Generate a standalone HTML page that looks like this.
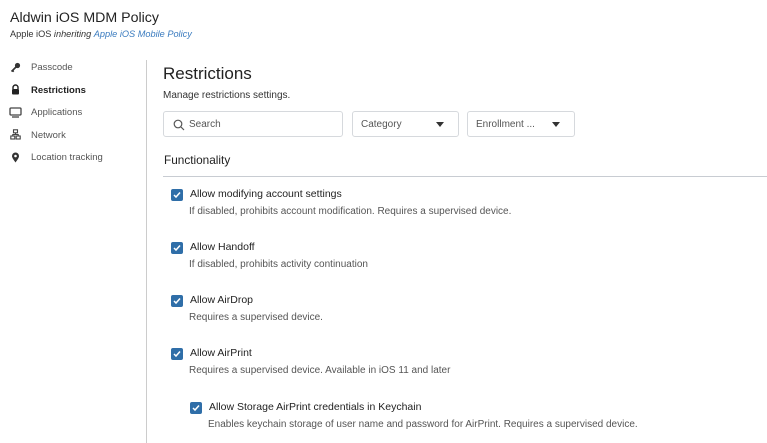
<!DOCTYPE html><html><head><style>
*{margin:0;padding:0;box-sizing:border-box}
body{width:767px;height:443px;overflow:hidden;background:#fff;font-family:"Liberation Sans",sans-serif;color:#222;position:relative}
.a{position:absolute;white-space:nowrap}
.nav{font-size:9.5px;color:#555}
.cb{position:absolute;width:12px;height:12px;background:#2f6ea8;border-radius:2px}
.cb svg{position:absolute;left:1px;top:1px}
.t{font-size:10.5px;color:#222}
.d{font-size:10px;color:#555}
.box{position:absolute;border:1px solid #d6d9dd;border-radius:3px;height:26px;top:111px;font-size:10px;color:#555}
.car{position:absolute;right:14px;top:10px;width:0;height:0;border-left:4px solid transparent;border-right:4px solid transparent;border-top:5px solid #333}
</style></head><body>
<div class="a" style="left:10px;top:10px;font-size:14.2px;color:#222">Aldwin iOS MDM Policy</div>
<div class="a" style="left:10px;top:29px;font-size:9.2px;color:#333">Apple iOS <i>inheriting</i> <i style="color:#3a7bbf">Apple iOS Mobile Policy</i></div>

<svg class="a" style="left:10px;top:62px" width="11" height="11" viewBox="0 0 11 11"><circle cx="7.5" cy="3.5" r="2.6" fill="#333"/><path d="M6 5L1.5 9.5M2.5 8.5l1.2 1.2" stroke="#333" stroke-width="1.6"/></svg>
<div class="a nav" style="left:31px;top:62px">Passcode</div>
<svg class="a" style="left:10px;top:84px" width="11" height="11" viewBox="0 0 11 11"><path d="M3 5V3.5a2.5 2.5 0 0 1 5 0V5" stroke="#222" stroke-width="1.4" fill="none"/><rect x="2" y="5" width="7" height="5.5" rx="1" fill="#222"/></svg>
<div class="a nav" style="left:31px;top:85px;color:#222;font-weight:bold">Restrictions</div>
<svg class="a" style="left:9px;top:107px" width="13" height="11" viewBox="0 0 13 11"><rect x="1" y="1" width="11" height="7" rx="1" stroke="#444" stroke-width="1.3" fill="none"/><path d="M3 10h7" stroke="#444" stroke-width="1.3"/></svg>
<div class="a nav" style="left:31px;top:107px">Applications</div>
<svg class="a" style="left:10px;top:129px" width="11" height="11" viewBox="0 0 11 11" fill="none" stroke="#444" stroke-width="1.1"><rect x="3.5" y="0.8" width="4" height="3"/><rect x="0.8" y="7" width="4" height="3"/><rect x="6.2" y="7" width="4" height="3"/><path d="M5.5 4v1.5M2.8 7V5.5h5.4V7"/></svg>
<div class="a nav" style="left:31px;top:130px">Network</div>
<svg class="a" style="left:11px;top:152px" width="9" height="11" viewBox="0 0 9 11"><path d="M4.5 10.5C2 7 1 5.5 1 4a3.5 3.5 0 0 1 7 0c0 1.5-1 3-3.5 6.5z" fill="#333"/><circle cx="4.5" cy="4" r="1.3" fill="#fff"/></svg>
<div class="a nav" style="left:31px;top:152px">Location tracking</div>

<div class="a" style="left:146px;top:60px;width:1px;height:383px;background:#ccc"></div>

<div class="a" style="left:163px;top:64px;font-size:17px;color:#222">Restrictions</div>
<div class="a" style="left:163px;top:90px;font-size:10px;color:#333">Manage restrictions settings.</div>

<div class="box" style="left:163px;width:180px"><svg class="a" style="left:9px;top:7px" width="12" height="12" viewBox="0 0 12 12" fill="none" stroke="#555" stroke-width="1.2"><circle cx="5" cy="5" r="3.8"/><path d="M8 8l3 3"/></svg><span class="a" style="left:25px;top:7px">Search</span></div>
<div class="box" style="left:352px;width:107px"><span class="a" style="left:8px;top:7px">Category</span><div class="car"></div></div>
<div class="box" style="left:467px;width:108px"><span class="a" style="left:8px;top:7px">Enrollment ...</span><div class="car"></div></div>

<div class="a" style="left:164px;top:153px;font-size:11.8px;color:#222">Functionality</div>
<div class="a" style="left:163px;top:176px;width:604px;height:1px;background:#c8ccd2"></div>

<div class="cb" style="left:171px;top:189px"><svg width="10" height="10" viewBox="0 0 10 10"><path d="M2 5l2 2 4-4.5" stroke="#fff" stroke-width="1.5" fill="none"/></svg></div>
<div class="a t" style="left:190px;top:188px">Allow modifying account settings</div>
<div class="a d" style="left:189px;top:206px">If disabled, prohibits account modification. Requires a supervised device.</div>

<div class="cb" style="left:171px;top:242px"><svg width="10" height="10" viewBox="0 0 10 10"><path d="M2 5l2 2 4-4.5" stroke="#fff" stroke-width="1.5" fill="none"/></svg></div>
<div class="a t" style="left:190px;top:241px">Allow Handoff</div>
<div class="a d" style="left:189px;top:259px">If disabled, prohibits activity continuation</div>

<div class="cb" style="left:171px;top:295px"><svg width="10" height="10" viewBox="0 0 10 10"><path d="M2 5l2 2 4-4.5" stroke="#fff" stroke-width="1.5" fill="none"/></svg></div>
<div class="a t" style="left:190px;top:294px">Allow AirDrop</div>
<div class="a d" style="left:189px;top:312px">Requires a supervised device.</div>

<div class="cb" style="left:171px;top:348px"><svg width="10" height="10" viewBox="0 0 10 10"><path d="M2 5l2 2 4-4.5" stroke="#fff" stroke-width="1.5" fill="none"/></svg></div>
<div class="a t" style="left:190px;top:347px">Allow AirPrint</div>
<div class="a d" style="left:189px;top:365px">Requires a supervised device. Available in iOS 11 and later</div>

<div class="cb" style="left:190px;top:402px"><svg width="10" height="10" viewBox="0 0 10 10"><path d="M2 5l2 2 4-4.5" stroke="#fff" stroke-width="1.5" fill="none"/></svg></div>
<div class="a t" style="left:209px;top:401px">Allow Storage AirPrint credentials in Keychain</div>
<div class="a d" style="left:208px;top:419px">Enables keychain storage of user name and password for AirPrint. Requires a supervised device.</div>
</body></html>
